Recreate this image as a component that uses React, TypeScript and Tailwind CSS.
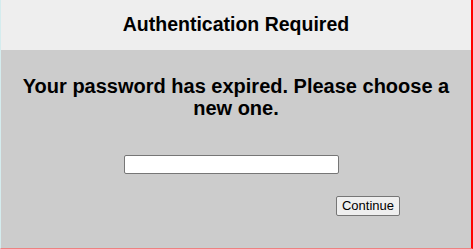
const App = (): JSX.Element => {
	return (
		<div className="w-[473px] h-[249px] flex flex-col overflow-hidden border-l border-l-[#d4ecee] border-r-2 border-r-[#ff0000] border-b border-b-[#f08080] bg-[#cccccc] font-['Liberation_Sans',Arial,sans-serif] text-black">
			<div className="h-[50px] shrink-0 bg-[#eeeeee] flex items-center justify-center">
				<h1 className="text-[19.5px] font-bold leading-none">Authentication Required</h1>
			</div>
			<div className="flex-1 flex flex-col">
				<h2 className="mt-[25px] px-[17px] text-center text-[20px] leading-[22px] font-bold">
					Your password has expired. Please choose a new one.
				</h2>
				<div className="mt-[36px] pl-[123px]">
					<input
						type="password"
						className="block w-[215px] h-[19px] bg-white border border-[#767676] rounded-[2px] outline-none"
					/>
				</div>
				<div className="mt-[19px] pl-[335px]">
					<button
						type="button"
						className="w-[64px] h-[20px] text-[13px] leading-none bg-[#efefef] border border-[#767676] rounded-[2px]"
					>
						Continue
					</button>
				</div>
			</div>
		</div>
	);
};

export default App;
